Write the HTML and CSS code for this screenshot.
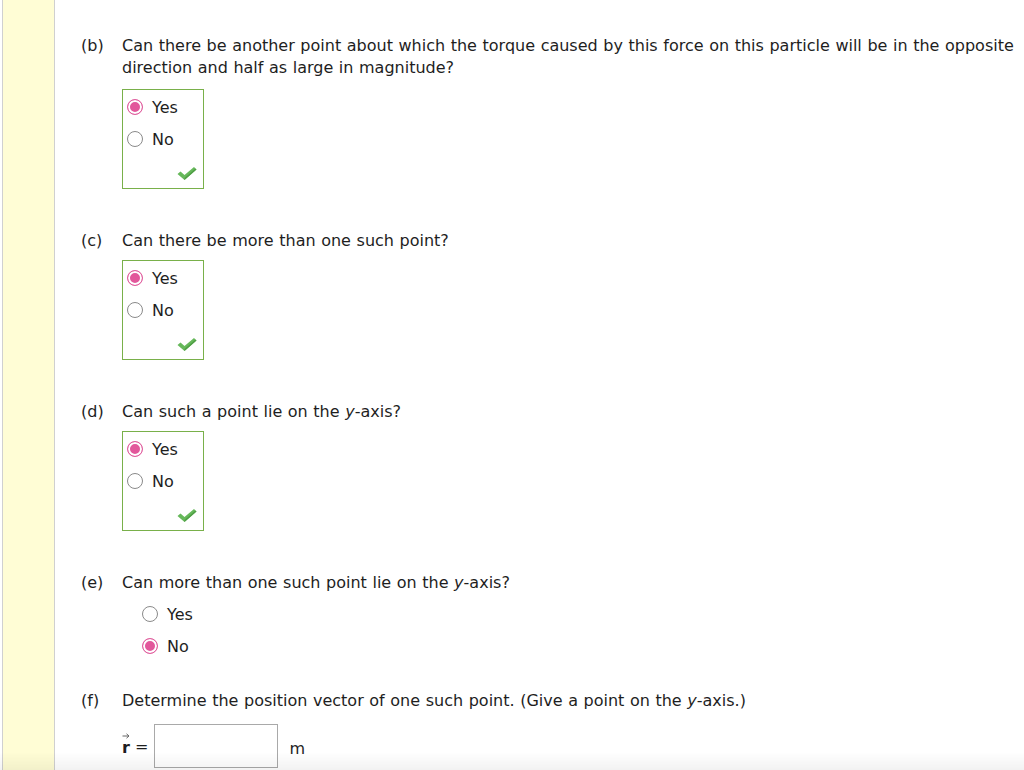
FILE: index.html
```html
<!DOCTYPE html>
<html>
<head>
<meta charset="utf-8">
<link rel="stylesheet" href="styles.css">
</head>
<body>
<div class="page">
  <div class="sidebar"></div>
  <div class="content">
    <div class="part part-b">
      <div class="label">(b)</div>
      <div class="body">
        <div class="question">Can there be another point about which the torque caused by this force on this particle will be in the opposite direction and half as large in magnitude?</div>
        <div class="answer-box">
          <div class="opt"><span class="radio on"></span><span>Yes</span></div>
          <div class="opt"><span class="radio"></span><span>No</span></div>
          <div class="mark"><svg width="22" height="15" viewBox="0 0 22 15"><path d="M1.5 8 L4.5 5.5 L8.5 9 L18 1 L20.5 3.5 L8.5 14 Z" fill="#66b85a"/><path d="M8.5 14 L20.5 3.5 L19.5 2.5 L8.5 12 Z" fill="#4f9e45"/></svg></div>
        </div>
      </div>
    </div>
    <div class="part">
      <div class="label">(c)</div>
      <div class="body">
        <div class="question">Can there be more than one such point?</div>
        <div class="answer-box">
          <div class="opt"><span class="radio on"></span><span>Yes</span></div>
          <div class="opt"><span class="radio"></span><span>No</span></div>
          <div class="mark"><svg width="22" height="15" viewBox="0 0 22 15"><path d="M1.5 8 L4.5 5.5 L8.5 9 L18 1 L20.5 3.5 L8.5 14 Z" fill="#66b85a"/><path d="M8.5 14 L20.5 3.5 L19.5 2.5 L8.5 12 Z" fill="#4f9e45"/></svg></div>
        </div>
      </div>
    </div>
    <div class="part">
      <div class="label">(d)</div>
      <div class="body">
        <div class="question">Can such a point lie on the <i>y</i>-axis?</div>
        <div class="answer-box">
          <div class="opt"><span class="radio on"></span><span>Yes</span></div>
          <div class="opt"><span class="radio"></span><span>No</span></div>
          <div class="mark"><svg width="22" height="15" viewBox="0 0 22 15"><path d="M1.5 8 L4.5 5.5 L8.5 9 L18 1 L20.5 3.5 L8.5 14 Z" fill="#66b85a"/><path d="M8.5 14 L20.5 3.5 L19.5 2.5 L8.5 12 Z" fill="#4f9e45"/></svg></div>
        </div>
      </div>
    </div>
    <div class="part">
      <div class="label">(e)</div>
      <div class="body">
        <div class="question">Can more than one such point lie on the <i>y</i>-axis?</div>
        <div class="plain-options">
          <div class="opt"><span class="radio"></span><span>Yes</span></div>
          <div class="opt"><span class="radio on"></span><span>No</span></div>
        </div>
      </div>
    </div>
    <div class="part part-f">
      <div class="label">(f)</div>
      <div class="body">
        <div class="question">Determine the position vector of one such point. (Give a point on the <i>y</i>-axis.)</div>
        <div class="vector-row">
          <span class="vec"><svg class="arrow" width="8" height="6" viewBox="0 0 8 6"><path d="M0.5 3 H7 M4.5 0.8 L7 3 L4.5 5.2" fill="none" stroke="#666" stroke-width="1"/></svg><b class="vec-r">r</b></span>
          <span class="eq">=</span>
          <span class="input"></span>
          <span class="unit">m</span>
        </div>
      </div>
    </div>
  </div>
</div>
<div class="bottom-shade"></div>
</body>
</html>
```
FILE: styles.css
```css
html, body {
  margin: 0;
  padding: 0;
  background: #fff;
}
body {
  font-family: "DejaVu Sans", Verdana, sans-serif;
  font-size: 16px;
  word-spacing: 0.5px;
  color: #1e1e1e;
}
.page {
  display: flex;
  min-height: 770px;
}
.sidebar {
  margin-left: 2px;
  width: 51px;
  background: #fffdd5;
  border-left: 1px solid #d0d0d0;
  border-right: 1px solid #d0d0d0;
  flex-shrink: 0;
}
.content {
  flex: 1;
  padding: 35px 0 0 26px;
}
.part {
  display: flex;
  margin-bottom: 41px;
}
.part-f {
  margin-top: -13px;
  margin-bottom: 0;
}
.label {
  width: 41px;
  flex-shrink: 0;
  line-height: 22px;
}
.body {
  flex: 1;
}
.question {
  line-height: 22px;
}
.answer-box {
  margin-top: 8px;
  width: 80px;
  height: 98px;
  border: 1px solid #79b04a;
  display: flex;
  flex-direction: column;
}
.part-b .answer-box {
  margin-top: 10px;
}
.opt {
  display: flex;
  align-items: center;
  height: 32px;
  padding-left: 4px;
}
.answer-box .opt:first-child {
  margin-top: 1px;
}
.radio {
  width: 16px;
  height: 16px;
  box-sizing: border-box;
  border-radius: 50%;
  border: 1px solid #8a8a8a;
  background: #fff;
  margin-right: 9px;
  flex-shrink: 0;
}
.radio.on {
  border: 1.5px solid #e0609f;
  background: #e2579b;
  box-shadow: inset 0 0 0 2px #fff;
}
.mark {
  margin-top: auto;
  display: flex;
  justify-content: flex-end;
  padding: 0 5px 7px 0;
}
.plain-options {
  padding-left: 16px;
  margin-top: 4px;
}
.vector-row {
  display: flex;
  align-items: center;
  margin-top: 12px;
}
.vec {
  display: inline-flex;
  flex-direction: column;
  align-items: center;
  gap: 2px;
  margin-top: -6px;
}
.arrow {
  display: block;
}
.vec-r {
  line-height: 13px;
}
.eq {
  margin-left: 5px;
  margin-right: 6px;
}
.input {
  width: 122px;
  height: 42px;
  border: 1px solid #a9a9a9;
  background: #fff;
}
.unit {
  margin-left: 11px;
  margin-top: 4px;
}
.bottom-shade {
  position: fixed;
  left: 0;
  right: 0;
  bottom: 0;
  height: 18px;
  background: linear-gradient(to bottom, rgba(0,0,0,0), rgba(0,0,0,0.05));
  pointer-events: none;
}
```
